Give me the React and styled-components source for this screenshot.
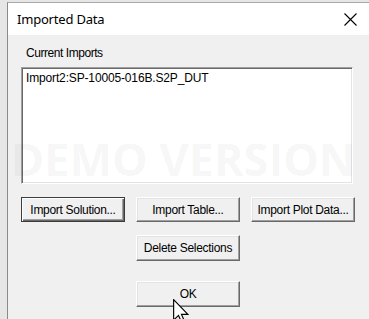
import React from "react";
import styled, { createGlobalStyle } from "styled-components";

const Global = createGlobalStyle`
  html, body { margin: 0; padding: 0; }
  body { background: #e6e6e6; overflow: hidden; }
  #root { width: 369px; height: 319px; overflow: hidden; }
`;

const Page = styled.div`
  width: 369px;
  height: 319px;
  padding: 2px 0 0 7px;
  box-sizing: border-box;
  background: #e6e6e6;
  overflow: hidden;
`;

const Window = styled.div`
  position: relative;
  width: 362px;
  height: 317px;
  border-left: 1px solid #8a8a8a;
  border-top: 1px solid #a8a8a8;
  background: #f0f0f0;
  display: flex;
  flex-direction: column;
  overflow: hidden;
`;

const TitleBar = styled.div`
  height: 32px;
  background: #ffffff;
  display: flex;
  align-items: center;
  padding-left: 9px;
  font-family: "Noto Sans", "Open Sans", sans-serif;
  font-size: 13px;
  color: #000;
`;

const Title = styled.span`
  flex: 1;
  letter-spacing: -0.2px;
`;

const Close = styled.div`
  width: 46px;
  margin-right: -3px;
  height: 32px;
  display: flex;
  align-items: center;
  justify-content: center;
`;

const Body = styled.div`
  padding: 11px 0 0 13px;
  font-family: "Liberation Sans", Arial, sans-serif;
  font-size: 12px;
  color: #000;
  display: flex;
  flex-direction: column;
`;

const Label = styled.div`
  margin-left: 5px;
  height: 14px;
  line-height: 14px;
  letter-spacing: -0.45px;
`;

const ListBox = styled.div`
  margin-top: 7px;
  width: 332px;
  height: 117px;
  box-sizing: border-box;
  background: #ffffff;
  border-top: 1px solid #a0a0a0;
  border-left: 1px solid #a0a0a0;
  border-right: 1px solid #ffffff;
  border-bottom: 1px solid #ffffff;
  box-shadow: inset 1px 1px 0 #696969, inset -1px -1px 0 #e3e3e3;
  padding: 3px 0 0 4px;
`;

const Item = styled.div`
  line-height: 14px;
  letter-spacing: -0.15px;
`;

const ButtonRow = styled.div`
  margin-top: ${(p) => p.$top || 13}px;
  display: flex;
  gap: 11px;
  padding-left: ${(p) => p.$indent || 0}px;
`;

const Button = styled.div`
  width: 104px;
  height: ${(p) => p.$h || 25}px;
  box-sizing: border-box;
  background: #f0f0f0;
  display: flex;
  align-items: center;
  justify-content: center;
  letter-spacing: -0.3px;
  border-top: 1px solid #ffffff;
  border-left: 1px solid #ffffff;
  border-right: 1px solid #696969;
  border-bottom: 1px solid #696969;
  box-shadow: inset -1px -1px 0 #a0a0a0, inset 1px 1px 0 #e3e3e3;
  ${(p) =>
    p.$default &&
    `
    border: 1px solid #3c3c3c;
    box-shadow: inset 1px 1px 0 #ffffff, inset -1px -1px 0 #696969, inset -2px -2px 0 #a0a0a0;
  `}
`;

const Watermark = styled.div`
  position: absolute;
  left: 3px;
  top: 133px;
  font-family: "Open Sans", "Noto Sans", sans-serif;
  font-weight: 700;
  font-size: 45px;
  line-height: 1;
  letter-spacing: 0px;
  color: rgba(0, 0, 0, 0.055);
  pointer-events: none;
  white-space: nowrap;
`;

const Cursor = styled.svg`
  position: absolute;
  left: 165px;
  top: 296px;
`;

export default function App() {
  return (
    <>
      <Global />
      <Page>
        <Window>
          <TitleBar>
            <Title>Imported Data</Title>
            <Close>
              <svg width="13" height="13" viewBox="0 0 13 13">
                <path d="M0.5 0.5 L12.5 12.5 M12.5 0.5 L0.5 12.5" stroke="#000" strokeWidth="1.1" />
              </svg>
            </Close>
          </TitleBar>
          <Body>
            <Label>Current Imports</Label>
            <ListBox>
              <Item>Import2:SP-10005-016B.S2P_DUT</Item>
            </ListBox>
            <ButtonRow>
              <Button $default>Import Solution...</Button>
              <Button>Import Table...</Button>
              <Button>Import Plot Data...</Button>
            </ButtonRow>
            <ButtonRow $indent={115}>
              <Button $h={26}>Delete Selections</Button>
            </ButtonRow>
            <ButtonRow $indent={115} $top={20}>
              <Button $h={26}>OK</Button>
            </ButtonRow>
          </Body>
          <Watermark>DEMO VERSION</Watermark>
          <Cursor width="16" height="25" viewBox="0 0 12.5 19.5">
            <path
              d="M0.5 0.5 L0.5 16.5 L4.3 12.8 L7 18.8 L9.2 17.8 L6.6 12 L11.6 12 Z"
              fill="#fff"
              stroke="#000"
              strokeWidth="0.9"
              strokeLinejoin="miter"
            />
          </Cursor>
        </Window>
      </Page>
    </>
  );
}
